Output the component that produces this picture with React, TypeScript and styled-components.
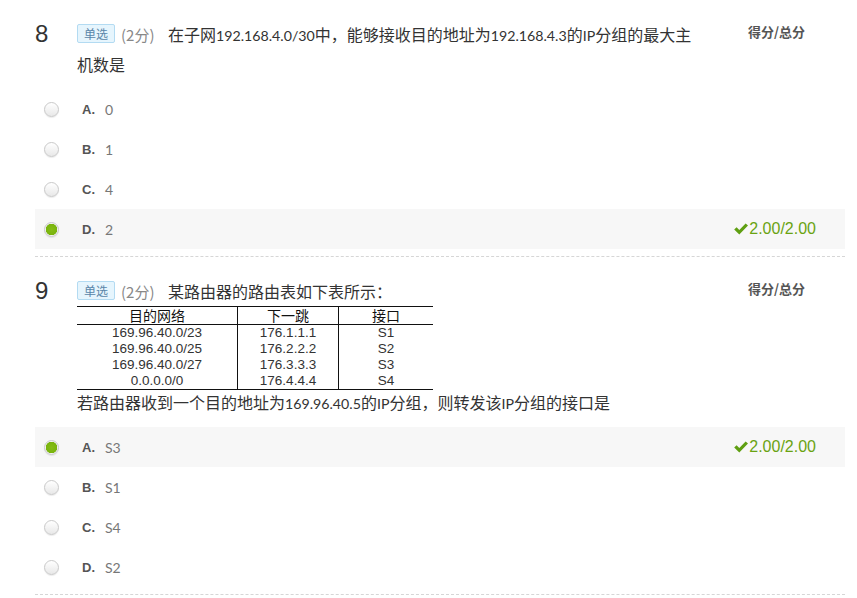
import React from 'react';
import styled, { createGlobalStyle } from 'styled-components';

const GlobalStyle = createGlobalStyle`
    html, body {
        margin: 0;
        padding: 0;
        background: #ffffff;
    }
    body {
        font-family: "Liberation Sans", Arial, "Noto Sans CJK SC", sans-serif;
        color: #333;
    }
`;

const SPage = styled.div`
    width: 857px;
    padding: 0 12px 0 35px;
    box-sizing: border-box;
`;

const SQuestion = styled.div`
    padding-top: 20px;
    border-bottom: 1px dashed #d6d6d6;
    width: 810px;
`;

const SHead = styled.div`
    display: flex;
    align-items: flex-start;
`;

const SNumber = styled.div`
    width: 42px;
    flex: none;
    font-family: "Liberation Sans", Arial, sans-serif;
    font-size: 24px;
    line-height: 28px;
    color: #333;
`;

const SBody = styled.div`
    width: 622px;
    flex: none;
    font-family: "Noto Sans CJK SC", sans-serif;
    font-size: 16px;
    line-height: 28px;
    color: #333;
`;

const SAfterTable = styled.div`
    line-height: 24px;
`;

const SLatin = styled.span`
    font-family: Lato, sans-serif;
    font-size: 14.2px;
`;

const STag = styled.span`
    display: inline-block;
    height: 17px;
    line-height: 17px;
    padding: 0 6px;
    margin-right: 6px;
    font-family: "Noto Sans CJK SC", sans-serif;
    font-size: 12px;
    color: #5a86a8;
    background: #e6f5fd;
    border: 1px solid #b3dbf2;
    border-radius: 2px;
    vertical-align: 2px;
`;

const SPoints = styled.span`
    display: inline-block;
    width: 39px;
    margin-right: 8px;
    color: #888;
    font-size: 15px;
`;

const SScoreHead = styled.div`
    margin-left: auto;
    width: 97px;
    font-family: "Noto Sans CJK SC", sans-serif;
    font-size: 13px;
    font-weight: bold;
    line-height: 24px;
    color: #555;
`;

const STable = styled.table`
    margin: 0;
    border-collapse: collapse;
    width: 356px;
    font-family: "Liberation Sans", Arial, sans-serif;
    color: #333;
    border-top: 1px solid #111;
    border-bottom: 1px solid #111;
`;

const SCell = styled.td<{ $w?: number; $head?: boolean }>`
    width: ${({ $w }) => ($w ? `${$w}px` : 'auto')};
    padding: 0;
    text-align: center;
    height: ${({ $head }) => ($head ? '17px' : '16px')};
    line-height: ${({ $head }) => ($head ? '17px' : '16px')};
    border-left: 1px solid #111;
    border-bottom: ${({ $head }) => ($head ? '1px solid #111' : 'none')};
    font-family: ${({ $head }) => ($head ? '"Noto Sans CJK SC", sans-serif' : 'inherit')};
    font-size: ${({ $head }) => ($head ? '14px' : '13.5px')};
    color: ${({ $head }) => ($head ? '#111' : '#333')};

    &:first-child {
        border-left: none;
    }
`;

const SOptions = styled.div`
    margin: 11px 0 7px;
`;

const SOption = styled.div<{ $active?: boolean }>`
    display: flex;
    align-items: center;
    height: 40px;
    padding-left: 9px;
    background: ${({ $active }) => ($active ? '#f7f7f7' : 'transparent')};
`;

const SRadio = styled.span<{ $checked?: boolean }>`
    width: 15px;
    height: 15px;
    border-radius: 50%;
    box-sizing: border-box;
    flex: none;
    border: 1px solid #c9c9c9;
    background: ${({ $checked }) =>
        $checked
            ? 'radial-gradient(circle, #86bd16 0, #7ab40e 5px, #7ab40e 5.5px, #f2f2f2 6px)'
            : 'linear-gradient(#ffffff, #e8e8e8)'};
    box-shadow: 0 1px 1px rgba(0, 0, 0, 0.08);
`;

const SLetter = styled.span`
    margin-left: 23px;
    width: 23px;
    font-family: "Liberation Sans", Arial, sans-serif;
    font-size: 13px;
    font-weight: bold;
    color: #555;
`;

const SValue = styled.span`
    font-family: Lato, sans-serif;
    font-size: 14px;
    color: #777;
`;

const SScore = styled.span`
    margin-left: auto;
    margin-right: 29px;
    display: flex;
    align-items: center;
    font-family: "Liberation Sans", Arial, sans-serif;
    font-size: 16px;
    color: #6aa312;
`;

const Check = () => (
    <svg width="16" height="14" viewBox="0 0 16 14">
        <path d="M1.2 7.4 L3.6 5.2 L6.3 8 L12.6 1.4 L15 3.6 L6.3 12.6 Z" fill="#5f9f12" />
    </svg>
);

type Opt = { letter: string; value: string; checked?: boolean };

const Options = ({ items }: { items: Opt[] }) => (
    <SOptions>
        {items.map((o) => (
            <SOption key={o.letter} $active={o.checked}>
                <SRadio $checked={o.checked} />
                <SLetter>{o.letter}.</SLetter>
                <SValue>{o.value}</SValue>
                {o.checked && (
                    <SScore>
                        <Check />
                        2.00/2.00
                    </SScore>
                )}
            </SOption>
        ))}
    </SOptions>
);

const routes = [
    ['169.96.40.0/23', '176.1.1.1', 'S1'],
    ['169.96.40.0/25', '176.2.2.2', 'S2'],
    ['169.96.40.0/27', '176.3.3.3', 'S3'],
    ['0.0.0.0/0', '176.4.4.4', 'S4'],
];

const App = () => (
    <>
        <GlobalStyle />
        <SPage>
            <SQuestion>
                <SHead>
                    <SNumber>8</SNumber>
                    <SBody>
                        <STag>单选</STag>
                        <SPoints>(2分)</SPoints>
                        在子网<SLatin>192.168.4.0/30</SLatin>中，能够接收目的地址为<SLatin>192.168.4.3</SLatin>的<SLatin>IP</SLatin>分组的最大主机数是
                    </SBody>
                    <SScoreHead>得分/总分</SScoreHead>
                </SHead>
                <Options
                    items={[
                        { letter: 'A', value: '0' },
                        { letter: 'B', value: '1' },
                        { letter: 'C', value: '4' },
                        { letter: 'D', value: '2', checked: true },
                    ]}
                />
            </SQuestion>

            <SQuestion>
                <SHead>
                    <SNumber>9</SNumber>
                    <SBody>
                        <STag>单选</STag>
                        <SPoints>(2分)</SPoints>
                        某路由器的路由表如下表所示：
                        <STable>
                            <tbody>
                                <tr>
                                    <SCell $head $w={160}>目的网络</SCell>
                                    <SCell $head $w={100}>下一跳</SCell>
                                    <SCell $head>接口</SCell>
                                </tr>
                                {routes.map((r) => (
                                    <tr key={r[0]}>
                                        <SCell>{r[0]}</SCell>
                                        <SCell>{r[1]}</SCell>
                                        <SCell>{r[2]}</SCell>
                                    </tr>
                                ))}
                            </tbody>
                        </STable>
                        <SAfterTable>
                            若路由器收到一个目的地址为<SLatin>169.96.40.5</SLatin>的<SLatin>IP</SLatin>分组，则转发该<SLatin>IP</SLatin>分组的接口是
                        </SAfterTable>
                    </SBody>
                    <SScoreHead>得分/总分</SScoreHead>
                </SHead>
                <Options
                    items={[
                        { letter: 'A', value: 'S3', checked: true },
                        { letter: 'B', value: 'S1' },
                        { letter: 'C', value: 'S4' },
                        { letter: 'D', value: 'S2' },
                    ]}
                />
            </SQuestion>
        </SPage>
    </>
);

export default App;
